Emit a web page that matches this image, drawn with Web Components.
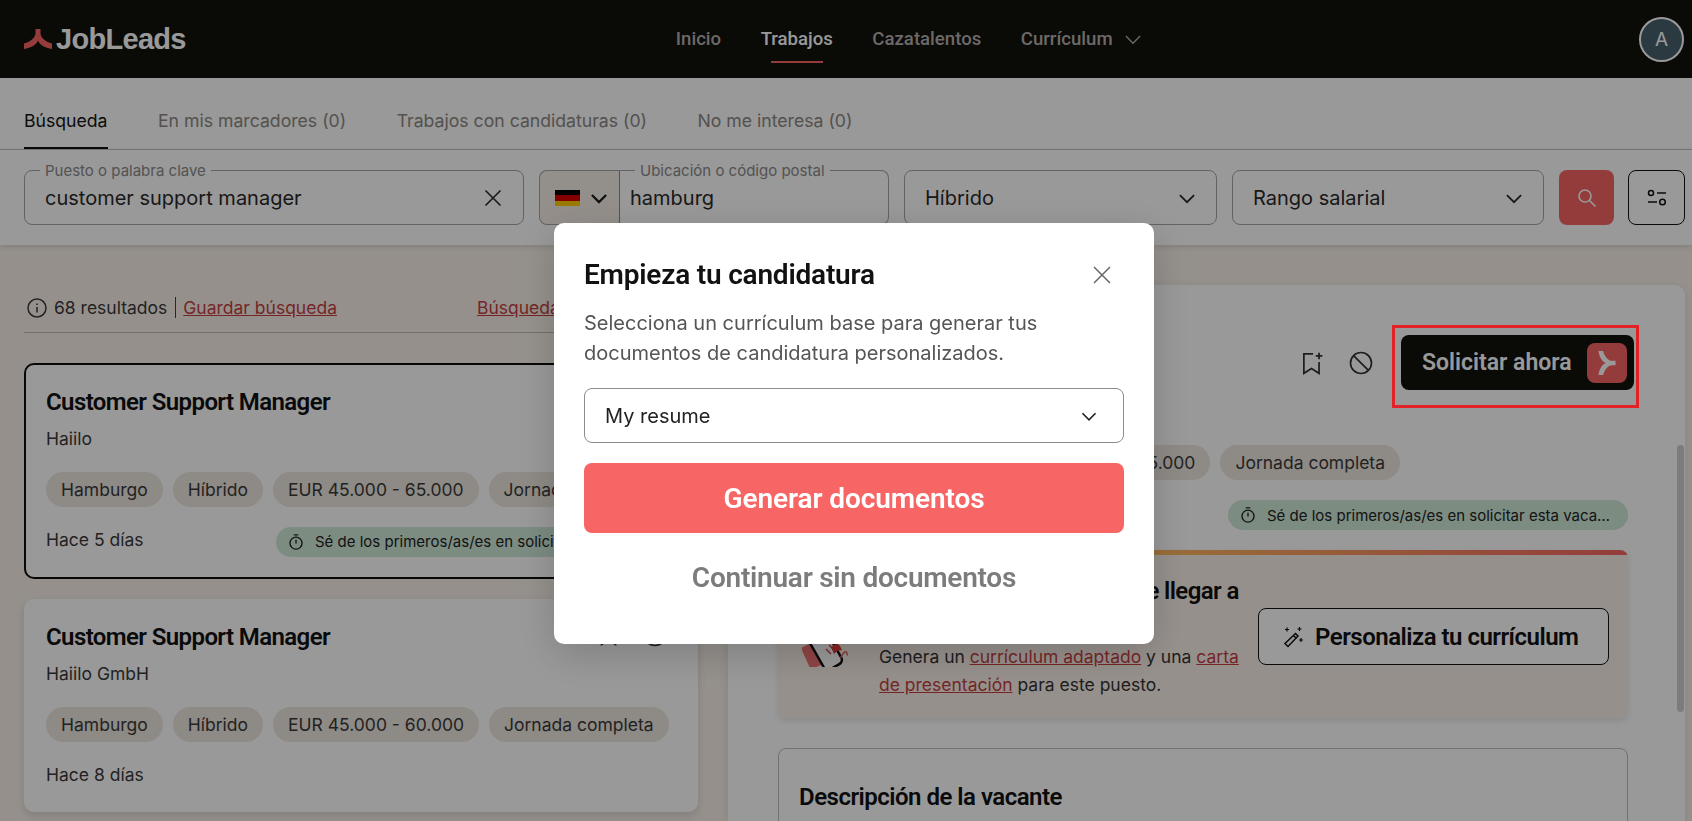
<!DOCTYPE html>
<html lang="es">
<head>
<meta charset="utf-8">
<title>JobLeads</title>
<style>
  html, body { margin: 0; height: 821px; overflow: hidden; }
  body { background: #f8f1ea; font-family: Inter, "Liberation Sans", sans-serif; color: #1c1c1c; }
  jl-main { display: flex; }
</style>
</head>
<body>
<jl-header></jl-header>
<jl-tabs></jl-tabs>
<jl-search></jl-search>
<jl-main>
  <jl-results>
    <jl-job-card selected title-text="Customer Support Manager" company="Haiilo" salary="EUR 45.000 - 65.000" age="Hace 5 días" early></jl-job-card>
    <jl-job-card title-text="Customer Support Manager" company="Haiilo GmbH" salary="EUR 45.000 - 60.000" age="Hace 8 días"></jl-job-card>
  </jl-results>
  <jl-panel></jl-panel>
</jl-main>
<jl-modal></jl-modal>
<jl-callout></jl-callout>

<script>
'use strict';

const HEADING = `Roboto, "Liberation Sans", sans-serif`;
const CHEVRON = `<path d="M5 8.500l6 6 6-6" fill="none" stroke="currentColor" stroke-width="1.500"/>`;
const LOGO = `<path d="M11.500 0h5v4C16.500 9 22 13 28 14.500V20C21 19 15.500 15.500 14 11.500 12.500 15.500 7 19 0 20v-5.500C6 13 11.500 9 11.500 4z" fill="currentColor"/>`;
const BOOKMARK = `<path d="M13 3.500H4.500V21.500l7-4.500 7 4.500V11M18.500 2.500v6M15.500 5.500h6" fill="none" stroke="currentColor" stroke-width="1.600"/>`;
const BLOCK = `<circle cx="12" cy="12" r="10.500" fill="none" stroke="currentColor" stroke-width="1.700"/><path d="M4.800 4.800l14.400 14.400" stroke="currentColor" stroke-width="1.700"/>`;
const TIMER = `<circle cx="12" cy="13.500" r="8" fill="none" stroke="currentColor" stroke-width="1.800"/><path d="M9 2.500h6M12 9v5" stroke="currentColor" stroke-width="1.800" fill="none"/>`;

function svg(size, body, view = '0 0 22 22') {
  return `<svg width="${size}" height="${size}" viewBox="${view}" aria-hidden="true">${body}</svg>`;
}

class JlHeader extends HTMLElement {
  constructor() {
    super();
    this.attachShadow({ mode: 'open' });
    this.shadowRoot.innerHTML = `
      <style>
        :host { display: flex; align-items: center; height: 78px; background: #11110d; padding: 0 8px 0 24px; box-sizing: border-box; }
        .logo { display: flex; align-items: center; gap: 4px; color: #f76565; }
        .logo b { font: 700 29px "Liberation Sans", sans-serif; letter-spacing: -0.7px; color: #fff; }
        nav { display: flex; gap: 39.500px; margin-left: 490px; align-items: center; font: 500 18.600px ${HEADING}; color: #b5b0ad; }
        nav a { position: relative; line-height: 24px; }
        nav a.on { color: #fff; }
        nav a.on::after { content: ''; position: absolute; left: 10px; right: 10px; bottom: -12px; height: 2px; background: #f76565; }
        nav span { display: flex; align-items: center; gap: 7px; }
        .avatar { margin-left: auto; width: 45px; height: 45px; box-sizing: border-box; border-radius: 50%; border: 2px solid #fff; background: #49606d; color: #fff; display: flex; align-items: center; justify-content: center; font-size: 19px; }
      </style>
      <div class="logo"><svg width="28" height="20" viewBox="0 0 28 20">${LOGO}</svg><b>JobLeads</b></div>
      <nav>
        <a>Inicio</a><a class="on">Trabajos</a><a>Cazatalentos</a>
        <span><a>Currículum</a>${svg(26, CHEVRON.replace('1.500', '1.200'))}</span>
      </nav>
      <div class="avatar">A</div>`;
  }
}

class JlTabs extends HTMLElement {
  constructor() {
    super();
    this.attachShadow({ mode: 'open' });
    this.shadowRoot.innerHTML = `
      <style>
        :host { display: flex; gap: 50.500px; height: 72px; padding-left: 24px; box-sizing: border-box; background: #fff; border-bottom: 1px solid #c4c4c4; font-size: 17.650px; color: #8c8783; }
        a { display: flex; align-items: center; padding-top: 14px; height: 71px; box-sizing: border-box; }
        .on { color: #141414; box-shadow: inset 0 -2px 0 #111; }
      </style>
      <a class="on">Búsqueda</a>
      <a>En mis marcadores (0)</a>
      <a>Trabajos con candidaturas (0)</a>
      <a>No me interesa (0)</a>`;
  }
}

class JlField extends HTMLElement {
  constructor() {
    super();
    this.attachShadow({ mode: 'open' });
    const label = this.getAttribute('label');
    this.shadowRoot.innerHTML = `
      <style>
        :host { display: flex; align-items: center; position: relative; box-sizing: border-box; height: 55px; border: 1px solid #a6a6a6; border-radius: 8px; padding: 0 19px 0 20px; font-size: 20px; color: #2a2a2a; background: #fff; }
        .label { position: absolute; top: -9px; left: var(--label-left, 15px); padding: 0 5px; background: #fff; font-size: 15px; line-height: 18px; color: #8a8a8a; }
        .end { margin-left: auto; display: flex; margin-right: var(--end-shift, 0); }
      </style>
      ${label ? `<span class="label">${label}</span>` : ''}
      <slot></slot>
      <span class="end"><slot name="end"></slot></span>`;
  }
}

class JlSearch extends HTMLElement {
  constructor() {
    super();
    this.attachShadow({ mode: 'open' });
    this.shadowRoot.innerHTML = `
      <style>
        :host { display: flex; height: 95px; box-sizing: border-box; padding: 20px 0 0 24px; background: #fff; box-shadow: 0 2px 6px rgba(0,0,0,.12); position: relative; }
        jl-field svg { display: block; }
        .country { display: flex; align-items: center; gap: 6px; box-sizing: border-box; width: 81px; height: 55px; padding-left: 15px; background: #f6efe8; border: 1px solid #a6a6a6; border-right-color: #8a8a8a; border-radius: 8px 0 0 8px; margin-left: 15px; color: #1c1c1c; }
        .flag { flex: none; width: 25px; height: 16px; background: linear-gradient(#000 33.300%, #dd0000 33.300% 66.600%, #ffce00 66.600%); }
        .country svg { flex: none; }
        .loc { width: 269px; border-left: 0; border-radius: 0 8px 8px 0; padding-left: 10px; --label-left: 15px; }
        .btn { box-sizing: border-box; height: 55px; display: flex; align-items: center; justify-content: center; border-radius: 8px; }
        .go { width: 55px; margin-left: 15px; background: #f76565; color: #fff; }
        .filter { width: 57px; margin-left: 14px; border: 1px solid #111; color: #111; }
        .drop { --end-shift: -3px; }
      </style>
      <jl-field style="width:500px;--end-shift:2px" label="Puesto o palabra clave">customer support manager
        <svg slot="end" width="18" height="18" viewBox="0 0 18 18"><path d="M1.500 1.500l15 15m0-15l-15 15" stroke="currentColor" stroke-width="1.600"/></svg>
      </jl-field>
      <div class="country"><span class="flag"></span>${svg(26, CHEVRON.replace('1.500', '1.900'))}</div>
      <jl-field class="loc" label="Ubicación o código postal">hamburg</jl-field>
      <jl-field class="drop" style="width:313px;margin-left:15px">Híbrido<span slot="end">${svg(26, CHEVRON)}</span></jl-field>
      <jl-field class="drop" style="width:312px;margin-left:15px">Rango salarial<span slot="end">${svg(26, CHEVRON)}</span></jl-field>
      <div class="btn go"><svg width="20" height="20" viewBox="0 0 20 20" fill="none" stroke="currentColor" stroke-width="1.600"><circle cx="8" cy="8" r="6"/><path d="M12.500 12.500l6 6"/></svg></div>
      <div class="btn filter"><svg width="20" height="20" viewBox="0 0 20 20" fill="none" stroke="currentColor" stroke-width="1.500"><circle cx="4" cy="5" r="2.500"/><path d="M10 5h9M1 14h9"/><circle cx="15.500" cy="14" r="2.800"/></svg></div>`;
  }
}

class JlChip extends HTMLElement {
  constructor() {
    super();
    this.attachShadow({ mode: 'open' });
    this.shadowRoot.innerHTML = `
      <style>
        :host { display: inline-flex; align-items: center; flex: none; height: 35px; padding: 0 15px; border-radius: 18px; background: #ede6df; font-size: 17.500px; color: #3a3a3a; white-space: nowrap; }
      </style>
      <slot></slot>`;
  }
}

class JlEarly extends HTMLElement {
  constructor() {
    super();
    this.attachShadow({ mode: 'open' });
    this.shadowRoot.innerHTML = `
      <style>
        :host { display: flex; align-items: center; gap: 10px; flex: none; box-sizing: border-box; width: var(--w, 400px); height: 30px; padding: 0 14px 0 11px; border-radius: 15px; background: #cfe9d8; color: #222; font-size: 15px; white-space: nowrap; }
        span { overflow: hidden; text-overflow: ellipsis; }
        svg { flex: none; }
      </style>
      ${svg(18, TIMER, '0 0 24 24')}<span>Sé de los primeros/as/es en solicitar esta vacante</span>`;
  }
}

class JlResults extends HTMLElement {
  constructor() {
    super();
    this.attachShadow({ mode: 'open' });
    this.shadowRoot.innerHTML = `
      <style>
        :host { display: block; flex: none; box-sizing: border-box; width: 698px; padding: 0 0 0 24px; }
        .bar { display: flex; align-items: center; height: 88px; padding-top: 38px; box-sizing: border-box; border-bottom: 1px solid #bdb8b3; font-size: 17.500px; color: #3a3a3a; }
        .bar svg { margin: 0 7px 0 3px; }
        .sep { width: 1px; height: 21px; background: #444; margin: 0 7px 0 8px; }
        a { color: #c33f3f; text-decoration: underline; }
        .right { margin-left: 140px; white-space: nowrap; }
        .list { display: flex; flex-direction: column; gap: 20px; padding-top: 30px; }
      </style>
      <div class="bar">
        <svg width="20" height="20" viewBox="0 0 20 20" fill="none" stroke="currentColor" stroke-width="1.500"><circle cx="10" cy="10" r="9"/><path d="M10 9v5.500M10 5.500v1.500"/></svg>
        68 resultados<span class="sep"></span><a>Guardar búsqueda</a><a class="right">Búsquedas guardadas</a>
      </div>
      <div class="list"><slot></slot></div>`;
  }
}

class JlJobCard extends HTMLElement {
  connectedCallback() {
    if (this.shadowRoot) return;
    this.attachShadow({ mode: 'open' });
    const selected = this.hasAttribute('selected');
    this.shadowRoot.innerHTML = `
      <style>
        :host { display: block; box-sizing: border-box; padding: ${selected ? '21px 20px 20px' : '20px 20px 21px'}; border-radius: 10px; background: #fff; border: 2px solid ${selected ? '#0c0c0c' : 'transparent'}; box-shadow: ${selected ? 'none' : '0 4px 10px rgba(0,0,0,.12)'}; }
        .top { display: flex; align-items: flex-start; justify-content: space-between; }
        h3 { margin: 0; font: 600 24px/32px ${HEADING}; letter-spacing: -0.6px; color: #111; }
        .acts { display: flex; gap: 22px; padding: 2px 9px 0 0; color: #333; }
        .sub { margin-top: 9px; font-size: 17.500px; line-height: 24px; color: #3a3a3a; }
        .chips { display: flex; gap: 10px; margin-top: 21px; }
        .foot { display: flex; align-items: flex-start; margin-top: 19px; min-height: 28px; font-size: 17.500px; line-height: 28px; color: #3a3a3a; }
        jl-early { margin-left: auto; --w: 400px; margin-top: 1px; }
      </style>
      <div class="top"><h3>${this.getAttribute('title-text')}</h3><div class="acts">${svg(24, BOOKMARK, '0 0 24 24')}${svg(24, BLOCK, '0 0 24 24')}</div></div>
      <div class="sub">${this.getAttribute('company')}</div>
      <div class="chips"><jl-chip>Hamburgo</jl-chip><jl-chip>Híbrido</jl-chip><jl-chip>${this.getAttribute('salary')}</jl-chip><jl-chip>Jornada completa</jl-chip></div>
      <div class="foot">${this.getAttribute('age')}${this.hasAttribute('early') ? '<jl-early></jl-early>' : ''}</div>`;
  }
}

class JlPanel extends HTMLElement {
  constructor() {
    super();
    this.attachShadow({ mode: 'open' });
    this.shadowRoot.innerHTML = `
      <style>
        :host { display: block; position: relative; flex: none; box-sizing: border-box; width: 957px; height: 536px; margin: 40px 0 0 30px; padding: 50px 57px 0 50px; background: #fff; border-radius: 10px 10px 0 0; box-shadow: 0 2px 10px rgba(0,0,0,.1); overflow: hidden; }
        .top { display: flex; align-items: center; justify-content: flex-end; height: 55px; margin-right: -6px; color: #333; }
        .top svg { flex: none; }
        .apply { display: flex; align-items: center; box-sizing: border-box; width: 233px; height: 55px; margin-left: 28px; padding: 0 7px 0 21px; border-radius: 8px; background: #11110d; color: #fff; font: 600 23px ${HEADING}; white-space: nowrap; }
        .mark { margin-left: auto; width: 40px; height: 40px; border-radius: 8px; background: #f76565; display: flex; align-items: center; justify-content: center; color: #fff; }
        .chips { display: flex; justify-content: flex-end; gap: 10px; margin-top: 55px; padding-right: 228px; }
        .early { display: flex; justify-content: flex-end; margin-top: 20px; }
        .banner { display: flex; align-items: center; gap: 30px; height: 168px; box-sizing: border-box; padding: 5px 19px 0 24px; position: relative; border-radius: 8px; overflow: hidden; background: #fbf1eb; }
        .wrap { border-radius: 8px; box-shadow: 0 3px 6px rgba(0,0,0,.1); margin-top: 20px; }
        .banner::before { content: ''; position: absolute; left: 0; right: 0; top: 0; height: 5px; background: linear-gradient(90deg, #ffcf5e 30%, #f76565); }
        .copy { flex: none; width: 372px; }
        .copy h4 { letter-spacing: -0.6px; }
        h4 { margin: 0; font: 600 24px/34px ${HEADING}; letter-spacing: -0.5px; color: #111; }
        p { margin: 1px 0 0; font-size: 17.500px; line-height: 28px; color: #333; }
        a { color: #c33f3f; text-decoration: underline; }
        .cta { flex: none; display: flex; align-items: center; gap: 11px; box-sizing: border-box; width: 351px; height: 57px; margin-left: -23px; padding-left: 23px; background: #fff; border: 1px solid #111; border-radius: 8px; font: 600 24px ${HEADING}; letter-spacing: -0.5px; color: #111; white-space: nowrap; }
        .desc { margin-top: 30px; height: 200px; box-sizing: border-box; padding-top: 28px; padding-left: 20px; border: 1px solid #bcbcbc; border-radius: 8px; }
        .desc h4 { line-height: 40px; }
        .bar { position: absolute; right: 1px; top: 160px; width: 7px; height: 267px; border-radius: 4px; background: #cfcfd4; }
      </style>
      <div class="top">
        ${svg(26, BOOKMARK, '0 0 24 24')}
        <span style="width:24px"></span>
        ${svg(24, BLOCK, '0 0 24 24')}
        <div class="apply">Solicitar ahora<span class="mark"><svg width="18" height="24" viewBox="0 0 20 28" style="display:block"><g transform="translate(20 0) rotate(90)">${LOGO}</g></svg></span></div>
      </div>
      <div class="chips"><jl-chip>Hamburgo</jl-chip><jl-chip>Híbrido</jl-chip><jl-chip>EUR 45.000 - 65.000</jl-chip><jl-chip>Jornada completa</jl-chip></div>
      <div class="early"><jl-early></jl-early></div>
      <div class="wrap"><div class="banner">
        <svg width="47" height="60" viewBox="0 0 47 60" style="flex:none">
          <rect x="3" y="36" width="19" height="24" rx="2" fill="#f07272" transform="rotate(-24 12 48)"/>
          <rect x="14" y="26" width="20" height="36" rx="5" fill="#fff" stroke="#111" stroke-width="2.500" transform="rotate(-30 24 44)"/>
          <path d="M24 42l5 5m-2-9l5 5" stroke="#d84a4a" stroke-width="1.500"/>
          <path d="M29 40l6-4 3 3 2 4-5 1-3 3z" fill="#e23b3b"/>
          <path d="M38 51c3-2 2-5 5-6s1 3 3 3" fill="none" stroke="#e46060" stroke-width="1.500"/>
        </svg>
        <div class="copy">
          <h4>Mejora tus posibilidades de llegar a la entrevista</h4>
          <p>Genera un <a>currículum adaptado</a> y una <a>carta</a> <a>de presentación</a> para este puesto.</p>
        </div>
        <div class="cta">
          <svg width="22" height="22" viewBox="0 0 22 22" fill="none" stroke="currentColor" stroke-width="1.500"><path d="M13.500 7.500l2.500 2.500L6 20.500l-3-3z"/><path d="M11.500 9.500l2.700 2.700" /><path d="M5 1.500v4M3 3.500h4M17.500 1v4M15.500 3h4M19 12v4M17 14h4" stroke-width="1.200"/></svg>
          Personaliza tu currículum
        </div>
      </div></div>
      <div class="desc"><h4>Descripción de la vacante</h4></div>
      <div class="bar"></div>`;
  }
}

class JlModal extends HTMLElement {
  constructor() {
    super();
    this.attachShadow({ mode: 'open' });
    this.shadowRoot.innerHTML = `
      <style>
        :host { position: fixed; inset: 0; z-index: 50; background: rgba(0,0,0,.4); }
        .box { position: absolute; left: 554px; top: 223px; box-sizing: border-box; width: 600px; height: 421px; padding: 32px 30px 0; background: #fff; border-radius: 10px; box-shadow: 0 10px 40px rgba(0,0,0,.18); }
        .head { display: flex; align-items: center; justify-content: space-between; padding-right: 13px; }
        h2 { margin: 0; font: 600 28px/40px ${HEADING}; letter-spacing: -0.2px; color: #111; }
        p { margin: 13px 0 0; max-width: 480px; font-size: 20px; line-height: 30px; color: #555; }
        .select { display: flex; align-items: center; justify-content: space-between; box-sizing: border-box; height: 55px; margin-top: 20px; padding: 0 22px 0 20px; border: 1px solid #8c8c8c; border-radius: 8px; font-size: 20px; color: #222; }
        .primary { display: flex; align-items: center; justify-content: center; height: 70px; margin-top: 20px; background: #f76565; color: #fff; border-radius: 8px; font: 600 28px ${HEADING}; letter-spacing: -0.1px; }
        .secondary { margin-top: 25px; text-align: center; font: 600 28px/40px ${HEADING}; letter-spacing: -0.25px; color: #7c7c7c; }
      </style>
      <div class="box">
        <div class="head"><h2>Empieza tu candidatura</h2><svg width="18" height="18" viewBox="0 0 18 18" style="color:#666"><path d="M1 1l16 16m0-16L1 17" stroke="currentColor" stroke-width="1.500"/></svg></div>
        <p>Selecciona un currículum base para generar tus documentos de candidatura personalizados.</p>
        <div class="select">My resume ${svg(24, CHEVRON)}</div>
        <div class="primary">Generar documentos</div>
        <div class="secondary">Continuar sin documentos</div>
      </div>`;
  }
}

// red annotation drawn on top of the screenshot
class JlCallout extends HTMLElement {
  constructor() {
    super();
    this.attachShadow({ mode: 'open' });
    this.shadowRoot.innerHTML = `
      <style>
        :host { position: fixed; left: 1392px; top: 325px; width: 247px; height: 83px; box-sizing: border-box; border: 3px solid #e32228; z-index: 60; }
      </style>`;
  }
}

customElements.define('jl-header', JlHeader);
customElements.define('jl-tabs', JlTabs);
customElements.define('jl-field', JlField);
customElements.define('jl-search', JlSearch);
customElements.define('jl-chip', JlChip);
customElements.define('jl-early', JlEarly);
customElements.define('jl-results', JlResults);
customElements.define('jl-job-card', JlJobCard);
customElements.define('jl-panel', JlPanel);
customElements.define('jl-modal', JlModal);
customElements.define('jl-callout', JlCallout);
</script>
</body>
</html>
